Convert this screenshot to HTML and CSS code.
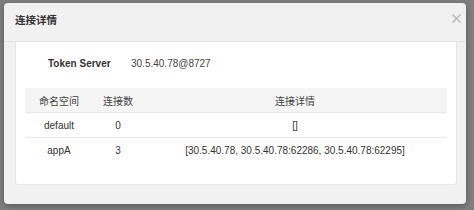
FILE: index.html
```html
<!DOCTYPE html>
<html>
<head>
  <meta charset="utf-8">
  <title>连接详情</title>
  <link rel="stylesheet" href="styles.css">
</head>
<body>
  <div class="modal">
    <div class="modal-header">
      <h4>连接详情</h4>
      <svg class="close" width="9" height="9" viewBox="0 0 9 9">
        <path d="M0.5 0.5 L8.5 8.5 M8.5 0.5 L0.5 8.5" stroke="#b3b3b3" stroke-width="1.3" fill="none"/>
      </svg>
    </div>
    <div class="modal-body">
      <div class="card">
        <div class="server-row">
          <span class="server-label">Token Server</span>
          <span class="server-value">30.5.40.78@8727</span>
        </div>
        <table class="conn-table">
          <thead>
            <tr>
              <th class="col-ns">命名空间</th>
              <th class="col-count">连接数</th>
              <th>连接详情</th>
            </tr>
          </thead>
          <tbody>
            <tr>
              <td>default</td>
              <td>0</td>
              <td>[]</td>
            </tr>
            <tr>
              <td>appA</td>
              <td>3</td>
              <td>[30.5.40.78, 30.5.40.78:62286, 30.5.40.78:62295]</td>
            </tr>
          </tbody>
        </table>
      </div>
    </div>
  </div>
</body>
</html>
```

FILE: styles.css
```css
body {
  margin: 0;
  padding: 3px 8px 6px 4px;
  background-color: #7f7f7f;
  font-family: "Liberation Sans", Arial, "Noto Sans CJK SC", sans-serif;
  font-size: 10px;
  color: #333;
}

.modal {
  background-color: #f1f1f1;
  border-radius: 4px;
  box-shadow: 0 2px 6px rgba(0, 0, 0, 0.3);
  height: 201px;
  box-sizing: border-box;
}

.modal-header {
  display: flex;
  justify-content: space-between;
  align-items: flex-start;
  height: 39px;
  box-sizing: border-box;
  padding: 10px 5px 0 11px;
  border-bottom: 1px solid #e2e2e2;
}

.modal-header h4 {
  margin: 0;
  font-size: 10.5px;
  font-weight: bold;
  color: #333;
  line-height: 14px;
}

.close {
  display: block;
  margin-top: 1px;
}

.modal-body {
  padding: 0 9px 0 11px;
}

.card {
  background-color: #fff;
  border: 1px solid #e6e6e6;
  border-top: none;
  border-radius: 0 0 3px 3px;
  height: 143px;
  box-sizing: border-box;
  padding: 11px 9px 0 9px;
}

.server-row {
  display: flex;
  align-items: center;
  height: 20px;
  padding-left: 23px;
  margin-bottom: 15px;
}

.server-label {
  font-weight: bold;
  width: 83px;
}

.server-value {
  color: #444;
}

.conn-table {
  width: 100%;
  border-collapse: collapse;
  text-align: center;
}

.conn-table th {
  background-color: #f5f5f5;
  font-weight: normal;
  color: #444;
  height: 24px;
  padding: 0;
  border-bottom: 1px solid #e8e8e8;
}

.conn-table td {
  height: 24px;
  padding: 0;
  color: #333;
}

.conn-table tbody tr:first-child td {
  border-bottom: 1px solid #e8e8e8;
}

.col-ns {
  width: 68px;
}

.col-count {
  width: 50px;
}
```
